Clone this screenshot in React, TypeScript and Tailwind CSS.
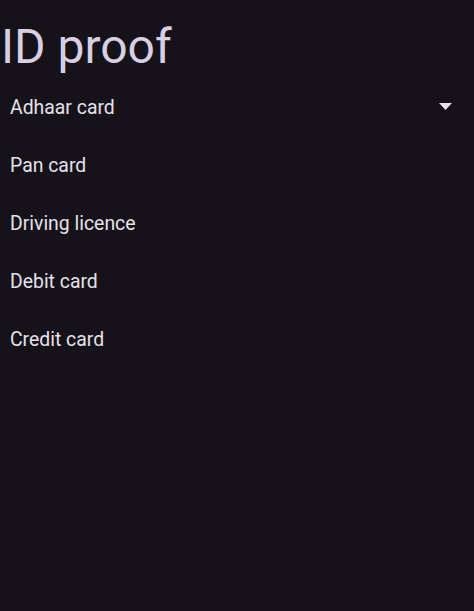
const options = ['Adhaar card', 'Pan card', 'Driving licence', 'Debit card', 'Credit card']

export default function App() {
  return (
    <div className="relative h-[611px] w-[474px] overflow-hidden bg-[#15121a] font-['Roboto',sans-serif]">
      <h1 className="pl-[1px] pt-[18px] text-[48px] leading-[58px] text-[#d8cfe2]">ID proof</h1>
      <div className="mt-[3px]">
        {options.map((label) => (
          <div key={label} className="flex h-[58px] items-center pl-[10px] text-[19.4px] text-[#e6e1ea]">
            {label}
          </div>
        ))}
        <div className="-mt-[6px] ml-[13px] h-px w-[395px] bg-[#19161e]" />
      </div>
      <svg className="absolute left-[439px] top-[103px]" width="13" height="7" viewBox="0 0 13 7">
        <path d="M0 0h13L6.5 7z" fill="#e6e1ea" />
      </svg>
    </div>
  )
}
